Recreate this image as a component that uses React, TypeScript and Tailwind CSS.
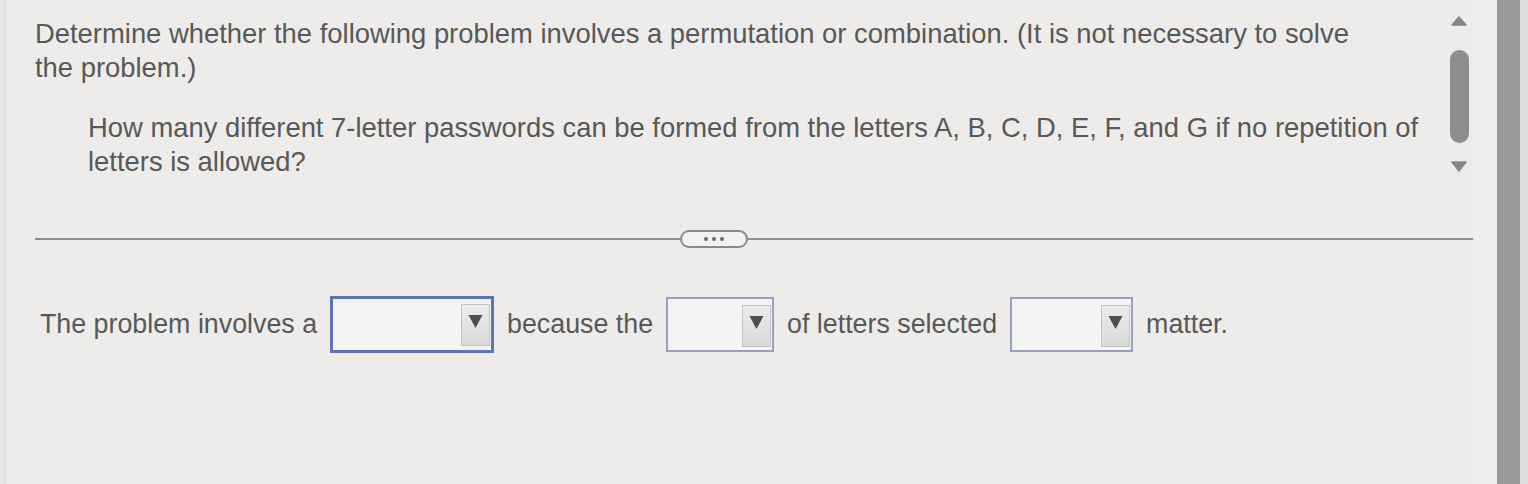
import React from "react";

function Dropdown({ width, focused }: { width: string; focused?: boolean }) {
  return (
    <div
      className={
        focused
          ? "relative h-[57px] border-[3px] border-[#5f74b4] bg-[#f4f4f3] flex items-start justify-end pt-[5px] pr-[1px] " + width
          : "relative h-[55px] border-2 border-[#97a0c4] bg-[#f4f4f3] flex items-start justify-end pt-[6px] pr-[1px] " + width
      }
    >
      <div className="w-[29px] h-[42px] border border-[#c4c4c4] bg-gradient-to-b from-[#ececec] to-[#d9d9d8] flex justify-center pt-[9px]">
        <svg width="15" height="15" viewBox="0 0 15 15">
          <path d="M0.5 1 L14.5 1 L7.5 14 Z" fill="#4f4f4f" />
        </svg>
      </div>
    </div>
  );
}

export default function App() {
  return (
    <div
      className="w-[1528px] h-[484px] bg-[#edecea] flex overflow-hidden text-[#585858]"
      style={{ fontFamily: '"Liberation Sans", Arial, sans-serif' }}
    >
      <div className="w-[6px] border-r border-[#dddddb] bg-[#e8e8e6]" />
      <div className="relative w-[1469px] flex flex-col">
        <div className="pl-[29px] pt-[17px]">
          <p className="text-[27.4px] leading-[34px] w-[1338px]">
            Determine whether the following problem involves a permutation or combination. (It is not necessary to solve the problem.)
          </p>
          <p className="mt-[26px] ml-[53px] text-[27.4px] leading-[34px] w-[1342px]">
            How many different 7-letter passwords can be formed from the letters A, B, C, D, E, F, and G if no repetition of letters is allowed?
          </p>
        </div>
        <div className="mt-[51px] ml-[29px] w-[1438px] flex items-center">
          <div className="h-[2px] bg-[#8e8e8e] w-[645px] flex-none" />
          <div className="w-[68px] h-[18px] rounded-full border-2 border-[#8a8a8a] bg-[#f1f1ef] flex items-center justify-center gap-[4px]">
            <span className="w-[4px] h-[4px] rounded-full bg-[#6a6a6a]" />
            <span className="w-[4px] h-[4px] rounded-full bg-[#6a6a6a]" />
            <span className="w-[4px] h-[4px] rounded-full bg-[#6a6a6a]" />
          </div>
          <div className="flex-1 h-[2px] bg-[#8e8e8e]" />
        </div>
        <div className="mt-[48px] ml-[34px] flex items-center gap-[13px] text-[26.8px]">
          <span>The problem involves a</span>
          <Dropdown width="w-[164px]" focused />
          <span>because the</span>
          <Dropdown width="w-[108px]" />
          <span>of letters selected</span>
          <Dropdown width="w-[123px]" />
          <span>matter.</span>
        </div>
        <div className="absolute top-[16px] left-[1443px] w-[20px] flex flex-col items-center">
          <svg width="16" height="10" viewBox="0 0 16 10">
            <path d="M8 1 L15 9 L1 9 Z" fill="#858585" strokeLinejoin="round" stroke="#858585" strokeWidth="1.5" />
          </svg>
          <div className="mt-[24px] w-[19px] h-[93px] rounded-full bg-[#8d8d8d]" />
          <svg className="mt-[17px]" width="16" height="12" viewBox="0 0 16 12">
            <path d="M1 2 L15 2 L8 11 Z" fill="#858585" strokeLinejoin="round" stroke="#858585" strokeWidth="1.5" />
          </svg>
        </div>
      </div>
      <div className="w-[22px] bg-[#efeeec]" />
      <div className="w-[23px] bg-[#9a9998]" />
      <div className="flex-1 bg-[#dcdcda]" />
    </div>
  );
}
